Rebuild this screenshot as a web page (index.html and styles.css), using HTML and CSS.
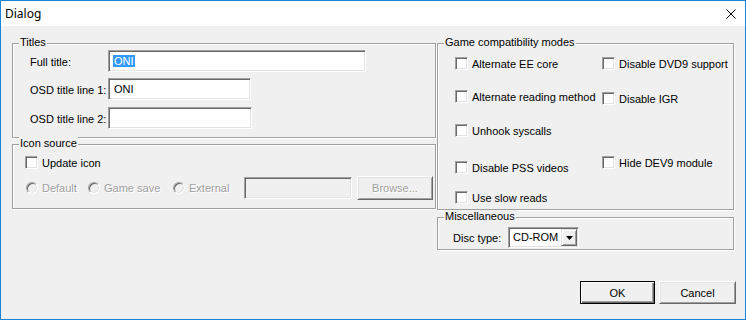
FILE: index.html
```html
<!DOCTYPE html>
<html>
<head>
<meta charset="utf-8">
<link rel="stylesheet" href="styles.css">
</head>
<body>
<div class="window">
  <div class="titlebar">
    <span class="title">Dialog</span>
    <svg class="close" width="10" height="10" viewBox="0 0 10 10"><path d="M0.5 0.5L9.5 9.5M9.5 0.5L0.5 9.5" stroke="#000" stroke-width="1" fill="none"/></svg>
  </div>
  <div class="client">
    <div class="columns">
      <div class="col-left">
        <div class="group g-titles">
          <span class="legend">Titles</span>
          <div class="field">
            <span class="flabel">Full title:</span>
            <div class="edit w258"><span class="sel">ONI</span></div>
          </div>
          <div class="field mt6">
            <span class="flabel">OSD title line 1:</span>
            <div class="edit w143">ONI</div>
          </div>
          <div class="field mt7">
            <span class="flabel">OSD title line 2:</span>
            <div class="edit w144"></div>
          </div>
        </div>
        <div class="group g-icon">
          <span class="legend">Icon source</span>
          <div class="chk"><span class="box"></span><span>Update icon</span></div>
          <div class="radio-row">
            <div class="radio r1"><span class="dot"></span><span class="dis">Default</span></div>
            <div class="radio r2"><span class="dot"></span><span class="dis">Game save</span></div>
            <div class="radio r3"><span class="dot"></span><span class="dis">External</span></div>
            <div class="edit disabled w108"></div>
            <div class="btn browse"><span class="dis">Browse...</span></div>
          </div>
        </div>
      </div>
      <div class="col-right">
        <div class="group g-compat">
          <span class="legend">Game compatibility modes</span>
          <div class="compat-cols">
            <div class="ccol ca">
              <div class="chk m0"><span class="box"></span><span>Alternate EE core</span></div>
              <div class="chk m20"><span class="box"></span><span>Alternate reading method</span></div>
              <div class="chk m21"><span class="box"></span><span>Unhook syscalls</span></div>
              <div class="chk m24"><span class="box"></span><span>Disable PSS videos</span></div>
              <div class="chk m17"><span class="box"></span><span>Use slow reads</span></div>
            </div>
            <div class="ccol cb">
              <div class="chk m0"><span class="box"></span><span>Disable DVD9 support</span></div>
              <div class="chk m22"><span class="box"></span><span>Disable IGR</span></div>
              <div class="chk m51"><span class="box"></span><span>Hide DEV9 module</span></div>
            </div>
          </div>
        </div>
        <div class="group g-misc">
          <span class="legend">Miscellaneous</span>
          <div class="misc-row">
            <span class="mlabel">Disc type:</span>
            <div class="combo">
              <span class="combo-text">CD-ROM</span>
              <span class="combo-btn"><svg width="7" height="4" viewBox="0 0 7 4"><path d="M0 0H7L3.5 4Z" fill="#000"/></svg></span>
            </div>
          </div>
        </div>
      </div>
    </div>
    <div class="buttons">
      <div class="btn default ok">OK</div>
      <div class="btn cancel">Cancel</div>
    </div>
  </div>
</div>
</body>
</html>
```
FILE: styles.css
```css
* { box-sizing: border-box; }
body {
  margin: 0;
  font-family: "Liberation Sans", Arial, sans-serif;
  font-size: 11px;
  color: #000;
  background: #f0f0f0;
}
.window {
  width: 746px;
  height: 320px;
  border: 1px solid #1883d7;
  background: #f0f0f0;
  display: flex;
  flex-direction: column;
}
.titlebar {
  flex: none;
  height: 25px;
  background: #fff;
  display: flex;
  align-items: center;
  padding-left: 4px;
}
.title {
  font-family: "Noto Sans", "Liberation Sans", sans-serif;
  font-size: 12px;
  line-height: 16px;
}
.close {
  margin-left: auto;
  margin-right: 9px;
  margin-top: 1px;
}
.client {
  flex: 1;
  padding: 17px 9px 0 11px;
}
.columns {
  display: flex;
  gap: 1px;
}
.col-left { width: 424px; }
.col-right { width: 297px; }

.group {
  position: relative;
  border: 1px solid #a0a0a0;
  box-shadow: inset 1px 1px 0 #fff, 1px 1px 0 #fff;
}
.legend {
  position: absolute;
  left: 6px;
  top: -8px;
  padding: 0 1px;
  line-height: 13px;
  background: #f0f0f0;
  white-space: nowrap;
}

/* Titles */
.g-titles {
  height: 95px;
  padding: 6px 0 0 17px;
}
.field {
  display: flex;
  align-items: center;
  height: 22px;
}
.flabel {
  width: 78px;
  white-space: nowrap;
  padding-top: 1px;
}
.mt6 { margin-top: 6px; }
.mt7 { margin-top: 7px; }

.edit {
  height: 22px;
  background: #fff;
  border-style: solid;
  border-width: 1px;
  border-color: #a0a0a0 #fff #fff #a0a0a0;
  box-shadow: inset 1px 1px 0 #696969, inset -1px -1px 0 #e3e3e3;
  padding-left: 5px;
  line-height: 20px;
  white-space: nowrap;
}
.edit.disabled { background: #f0f0f0; }
.w258 { width: 258px; }
.w143 { width: 143px; }
.w144 { width: 144px; }
.w108 { width: 108px; }
.sel {
  display: inline-block;
  background: #3399ff;
  color: #fff;
  line-height: 12px;
  margin-left: -1px;
  padding: 0 1px 0 1px;
}

/* Icon source */
.g-icon {
  height: 65px;
  margin-top: 6px;
  padding: 11px 0 0 12px;
}
.chk {
  display: flex;
  align-items: center;
  gap: 4px;
  height: 13px;
  white-space: nowrap;
}
.box {
  flex: none;
  width: 13px;
  height: 13px;
  background: #fff;
  border-style: solid;
  border-width: 1px;
  border-color: #a0a0a0 #fff #fff #a0a0a0;
  box-shadow: inset 1px 1px 0 #696969, inset -1px -1px 0 #e3e3e3;
}
.radio-row {
  display: flex;
  align-items: center;
  height: 24px;
  margin-top: 7px;
  padding-left: 1px;
}
.radio {
  display: flex;
  align-items: center;
  gap: 4px;
  white-space: nowrap;
}
.r1 { width: 62px; }
.r2 { width: 85px; }
.r3 { width: 71px; }
.dot {
  flex: none;
  width: 12px;
  height: 12px;
  border-radius: 50%;
  background: #f0f0f0;
  border-style: solid;
  border-width: 1px;
  border-color: #a0a0a0 #fff #fff #a0a0a0;
  box-shadow: inset 1px 1px 0 #696969, inset -1px -1px 0 #e3e3e3;
}
.dis {
  color: #a0a0a0;
  text-shadow: 1px 1px 0 #fff;
}
.btn {
  display: flex;
  align-items: center;
  justify-content: center;
  background: #f0f0f0;
  border-style: solid;
  border-width: 1px;
  border-color: #fff #696969 #696969 #fff;
  box-shadow: inset 1px 1px 0 #e3e3e3, inset -1px -1px 0 #a0a0a0;
  white-space: nowrap;
}
.browse {
  width: 76px;
  height: 24px;
  margin-left: 5px;
}

/* Compat */
.g-compat {
  height: 167px;
  padding: 13px 0 0 17px;
}
.compat-cols { display: flex; }
.ca { width: 147px; }
.m0 { margin-top: 0; }
.m17 { margin-top: 17px; }
.m20 { margin-top: 20px; }
.m21 { margin-top: 21px; }
.m22 { margin-top: 22px; }
.m24 { margin-top: 24px; }
.m51 { margin-top: 51px; }

/* Misc */
.g-misc {
  height: 33px;
  margin-top: 7px;
  padding: 9px 0 0 15px;
}
.misc-row {
  display: flex;
  align-items: center;
  height: 21px;
}
.mlabel { width: 55px; white-space: nowrap; }
.combo {
  width: 71px;
  height: 21px;
  display: flex;
  align-items: stretch;
  background: #fff;
  border-style: solid;
  border-width: 1px;
  border-color: #a0a0a0 #fff #fff #a0a0a0;
  box-shadow: inset 1px 1px 0 #696969, inset -1px -1px 0 #e3e3e3;
  padding: 1px;
}
.combo-text {
  flex: 1;
  padding-left: 3px;
  line-height: 17px;
}
.combo-btn {
  width: 16px;
  display: flex;
  align-items: center;
  justify-content: center;
  background: #f0f0f0;
  border-style: solid;
  border-width: 1px;
  border-color: #e3e3e3 #696969 #696969 #e3e3e3;
  box-shadow: inset 1px 1px 0 #fff, inset -1px -1px 0 #a0a0a0;
}

/* Buttons */
.buttons {
  display: flex;
  justify-content: flex-end;
  gap: 4px;
  margin-top: 31px;
}
.ok { width: 75px; height: 23px; }
.cancel { width: 77px; height: 23px; }
.btn.default {
  border-color: #000;
  box-shadow: inset 1px 1px 0 #fff, inset -1px -1px 0 #696969, inset -2px -2px 0 #a0a0a0;
}
```
